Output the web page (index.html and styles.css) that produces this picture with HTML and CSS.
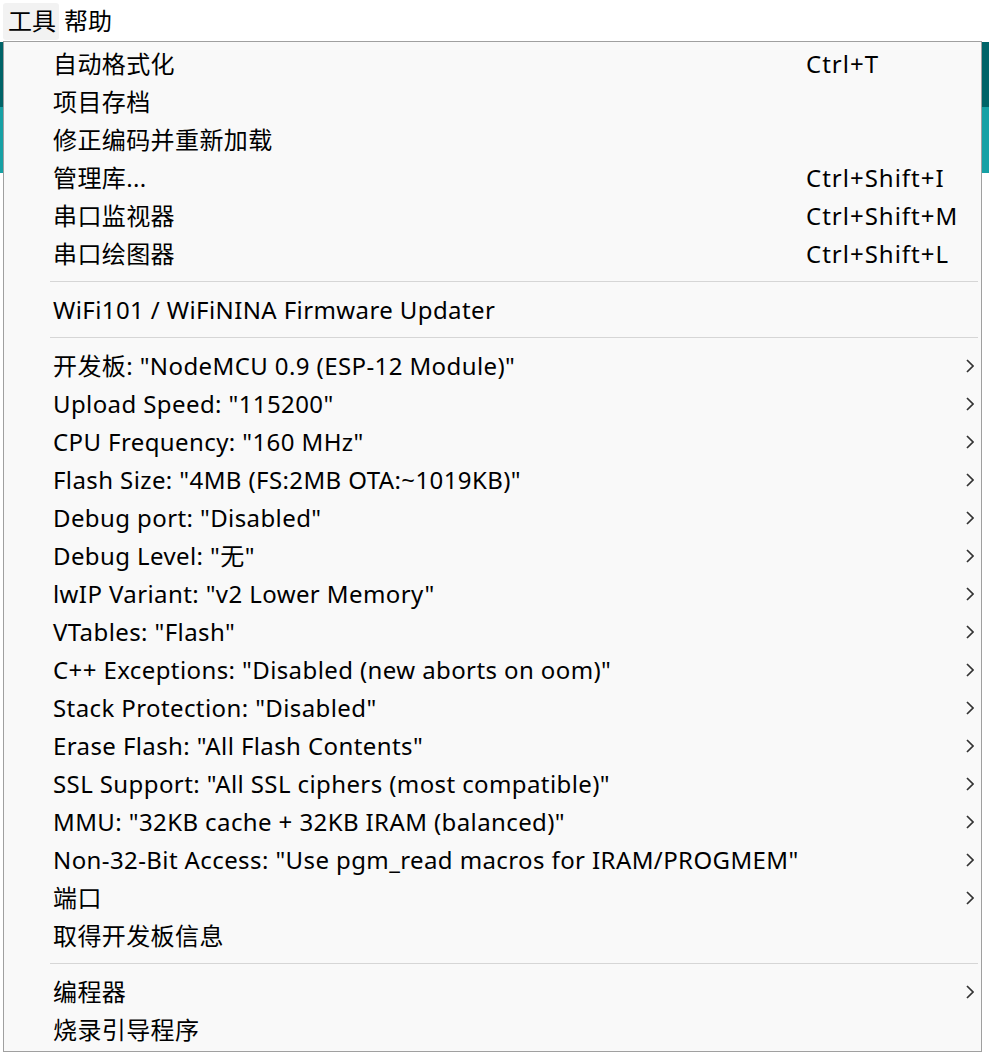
FILE: index.html
```html
<!DOCTYPE html>
<html lang="zh-CN">
<head>
    <meta charset="UTF-8">
    <meta name="viewport" content="width=device-width, initial-scale=1.0">
    <title>Arduino - 工具菜单</title>
    <link rel="stylesheet" href="styles.css">
</head>
<body>
    <div class="menubar">
        <div class="menubar-item active">工具</div>
        <div class="menubar-item">帮助</div>
    </div>
    <div class="editor-header"></div>
    <div class="editor-toolbar"></div>

    <div class="dropdown">
        <div class="menu-item"><span class="label">自动格式化</span><span class="shortcut">Ctrl+T</span><span class="arrow"></span></div>
        <div class="menu-item"><span class="label">项目存档</span><span class="shortcut"></span><span class="arrow"></span></div>
        <div class="menu-item"><span class="label">修正编码并重新加载</span><span class="shortcut"></span><span class="arrow"></span></div>
        <div class="menu-item"><span class="label">管理库...</span><span class="shortcut">Ctrl+Shift+I</span><span class="arrow"></span></div>
        <div class="menu-item"><span class="label">串口监视器</span><span class="shortcut">Ctrl+Shift+M</span><span class="arrow"></span></div>
        <div class="menu-item"><span class="label">串口绘图器</span><span class="shortcut">Ctrl+Shift+L</span><span class="arrow"></span></div>
        <div class="separator"></div>
        <div class="menu-item"><span class="label">WiFi101 / WiFiNINA Firmware Updater</span><span class="shortcut"></span><span class="arrow"></span></div>
        <div class="separator"></div>
        <div class="menu-item sub"><span class="label">开发板: "NodeMCU 0.9 (ESP-12 Module)"</span><span class="shortcut"></span><span class="arrow"><svg viewBox="0 0 8 14"><path d="M1 1 L7 7 L1 13"/></svg></span></div>
        <div class="menu-item sub"><span class="label">Upload Speed: "115200"</span><span class="shortcut"></span><span class="arrow"><svg viewBox="0 0 8 14"><path d="M1 1 L7 7 L1 13"/></svg></span></div>
        <div class="menu-item sub"><span class="label">CPU Frequency: "160 MHz"</span><span class="shortcut"></span><span class="arrow"><svg viewBox="0 0 8 14"><path d="M1 1 L7 7 L1 13"/></svg></span></div>
        <div class="menu-item sub"><span class="label">Flash Size: "4MB (FS:2MB OTA:~1019KB)"</span><span class="shortcut"></span><span class="arrow"><svg viewBox="0 0 8 14"><path d="M1 1 L7 7 L1 13"/></svg></span></div>
        <div class="menu-item sub"><span class="label">Debug port: "Disabled"</span><span class="shortcut"></span><span class="arrow"><svg viewBox="0 0 8 14"><path d="M1 1 L7 7 L1 13"/></svg></span></div>
        <div class="menu-item sub"><span class="label">Debug Level: "无"</span><span class="shortcut"></span><span class="arrow"><svg viewBox="0 0 8 14"><path d="M1 1 L7 7 L1 13"/></svg></span></div>
        <div class="menu-item sub"><span class="label">lwIP Variant: "v2 Lower Memory"</span><span class="shortcut"></span><span class="arrow"><svg viewBox="0 0 8 14"><path d="M1 1 L7 7 L1 13"/></svg></span></div>
        <div class="menu-item sub"><span class="label">VTables: "Flash"</span><span class="shortcut"></span><span class="arrow"><svg viewBox="0 0 8 14"><path d="M1 1 L7 7 L1 13"/></svg></span></div>
        <div class="menu-item sub"><span class="label">C++ Exceptions: "Disabled (new aborts on oom)"</span><span class="shortcut"></span><span class="arrow"><svg viewBox="0 0 8 14"><path d="M1 1 L7 7 L1 13"/></svg></span></div>
        <div class="menu-item sub"><span class="label">Stack Protection: "Disabled"</span><span class="shortcut"></span><span class="arrow"><svg viewBox="0 0 8 14"><path d="M1 1 L7 7 L1 13"/></svg></span></div>
        <div class="menu-item sub"><span class="label">Erase Flash: "All Flash Contents"</span><span class="shortcut"></span><span class="arrow"><svg viewBox="0 0 8 14"><path d="M1 1 L7 7 L1 13"/></svg></span></div>
        <div class="menu-item sub"><span class="label">SSL Support: "All SSL ciphers (most compatible)"</span><span class="shortcut"></span><span class="arrow"><svg viewBox="0 0 8 14"><path d="M1 1 L7 7 L1 13"/></svg></span></div>
        <div class="menu-item sub"><span class="label">MMU: "32KB cache + 32KB IRAM (balanced)"</span><span class="shortcut"></span><span class="arrow"><svg viewBox="0 0 8 14"><path d="M1 1 L7 7 L1 13"/></svg></span></div>
        <div class="menu-item sub"><span class="label">Non-32-Bit Access: "Use pgm_read macros for IRAM/PROGMEM"</span><span class="shortcut"></span><span class="arrow"><svg viewBox="0 0 8 14"><path d="M1 1 L7 7 L1 13"/></svg></span></div>
        <div class="menu-item sub"><span class="label">端口</span><span class="shortcut"></span><span class="arrow"><svg viewBox="0 0 8 14"><path d="M1 1 L7 7 L1 13"/></svg></span></div>
        <div class="menu-item"><span class="label">取得开发板信息</span><span class="shortcut"></span><span class="arrow"></span></div>
        <div class="separator"></div>
        <div class="menu-item sub"><span class="label">编程器</span><span class="shortcut"></span><span class="arrow"><svg viewBox="0 0 8 14"><path d="M1 1 L7 7 L1 13"/></svg></span></div>
        <div class="menu-item"><span class="label">烧录引导程序</span><span class="shortcut"></span><span class="arrow"></span></div>
    </div>
</body>
</html>
```

FILE: styles.css
```css
body {
    margin: 0;
    background-color: #fff;
    font-family: "Noto Sans", "Noto Sans CJK SC", sans-serif;
    font-size: 24px;
    color: #000;
}
.menubar {
    display: flex;
    height: 38px;
    padding: 3px 0 0 3px;
}
.menubar-item {
    height: 37px;
    line-height: 36px;
    padding: 0 3px 0 5px;
    border-radius: 3px;
}
.menubar-item.active {
    background-color: #f2f2f2;
}
.editor-header {
    height: 65px;
    margin-top: 1px;
    background-color: #006468;
}
.editor-toolbar {
    height: 66px;
    background-color: #17a1a5;
}
.dropdown {
    position: absolute;
    top: 41px;
    left: 3px;
    width: 979px;
    box-sizing: border-box;
    padding: 3px 0 2px;
    background-color: #f9f9f9;
    border: 1px solid #a0a0a0;
    letter-spacing: 0.4px;
}
.menu-item {
    display: grid;
    grid-template-columns: 753px 1fr 20px;
    height: 38px;
    line-height: 37px;
    padding-left: 49px;
    white-space: nowrap;
}
.shortcut {
    white-space: nowrap;
    letter-spacing: 1px;
}
.arrow {
    display: flex;
    align-items: center;
    justify-content: flex-end;
    padding-right: 7px;
}
.arrow svg {
    width: 8px;
    height: 14px;
    fill: none;
    stroke: #333;
    stroke-width: 1.7;
}
.separator {
    height: 1px;
    margin: 8px 3px 9px 46px;
    background-color: #d6d6d6;
}
```
